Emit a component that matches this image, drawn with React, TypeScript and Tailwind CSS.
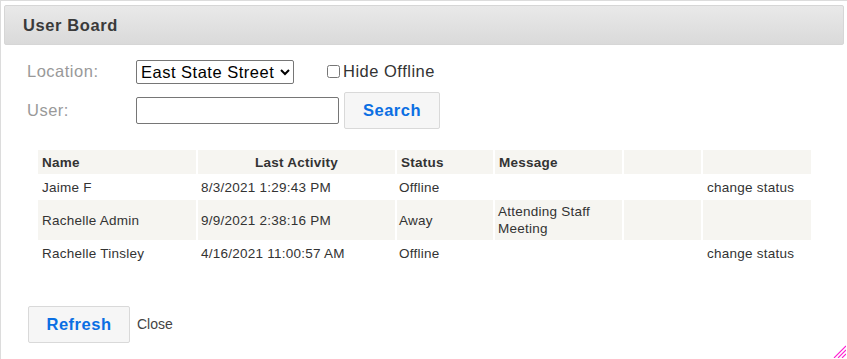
import React from "react";

const rows = [
  { name: "Jaime F", last: "8/3/2021 1:29:43 PM", status: "Offline", msg: "", action: "change status" },
  { name: "Rachelle Admin", last: "9/9/2021 2:38:16 PM", status: "Away", msg: "Attending Staff Meeting", action: "" },
  { name: "Rachelle Tinsley", last: "4/16/2021 11:00:57 AM", status: "Offline", msg: "", action: "change status" },
];

function ResizeGrip() {
  // jquery-ui style corner grip, magenta diagonals
  return (
    <svg className="absolute right-[1px] bottom-[1px]" width="13" height="13" viewBox="0 0 13 13">
      <g stroke="#ff1fd0" strokeWidth="1.1">
        <line x1="13" y1="1" x2="1" y2="13" />
        <line x1="13" y1="5" x2="5" y2="13" />
        <line x1="13" y1="9" x2="9" y2="13" />
      </g>
    </svg>
  );
}

export default function App() {
  return (
    <div className="relative h-[359px] w-[847px] overflow-hidden border-l border-t border-[#dcdcdc] bg-white pl-[3px] pr-[3px] pt-[4px] font-['Liberation_Sans',Arial,sans-serif] text-[#333]">
      {/* title bar */}
      <div className="flex h-[40px] items-center rounded-[2px] border border-[#d6d6d6] bg-gradient-to-b from-[#e9e9e9] to-[#dadada] pl-[18px]">
        <span className="text-[16.5px] font-bold tracking-[0.6px] text-[#3a3a3a]">User Board</span>
      </div>

      <div className="pl-[23px] pt-[14px] text-[16.5px] tracking-[0.5px]">
        <div className="flex h-[25px] items-center">
          <label className="w-[109px] text-[#999]">Location:</label>
          <select className="h-[24px] w-[158px] rounded-[2px] border border-[#767676] bg-white pl-0 text-black" defaultValue="east">
            <option value="east">East State Street</option>
          </select>
          <label className="ml-[33px] flex items-center text-[#333]">
            <input type="checkbox" className="m-0 mr-[3px] h-[13px] w-[13px]" />
            Hide Offline
          </label>
        </div>

        <div className="mt-[8px] flex h-[37px] items-center">
          <label className="w-[109px] text-[#999]">User:</label>
          <input type="text" className="h-[27px] w-[203px] rounded-[2px] border border-[#767676] bg-white" />
          <button className="ml-[5px] h-[37px] w-[96px] rounded-[2px] border border-[#d9d9d9] bg-[#f6f6f6] font-bold text-[#0b6fe3]">
            Search
          </button>
        </div>
      </div>

      <table className="ml-[32px] mt-[19px] border-separate border-spacing-[2px] text-[13.5px] leading-[17px] tracking-[0.25px] text-[#333]">
        <thead>
          <tr className="bg-[#f6f5f1]">
            <th className="h-[24px] w-[158px] px-[4px] text-left font-bold">Name</th>
            <th className="w-[197px] px-[4px] text-center font-bold">Last Activity</th>
            <th className="w-[96px] px-[4px] text-left font-bold">Status</th>
            <th className="w-[127px] px-[4px] text-left font-bold">Message</th>
            <th className="w-[77px]"></th>
            <th className="w-[108px]"></th>
          </tr>
        </thead>
        <tbody>
          {rows.map((r, i) => (
            <tr key={r.name} className={i % 2 === 1 ? "bg-[#f6f5f1]" : "bg-white"}>
              <td className="h-[22px] px-[4px] py-[2px]">{r.name}</td>
              <td className="px-[3px] py-[2px]">{r.last}</td>
              <td className="px-[2px] py-[2px]">{r.status}</td>
              <td className="px-[3px] py-[3px] leading-[17px]">{r.msg}</td>
              <td></td>
              <td className="px-[4px] py-[2px]">{r.action}</td>
            </tr>
          ))}
        </tbody>
      </table>

      <div className="ml-[24px] mt-[40px] flex items-center">
        <button className="h-[37px] w-[102px] rounded-[2px] border border-[#d9d9d9] bg-[#f6f6f6] text-[16.5px] font-bold tracking-[0.5px] text-[#0b6fe3]">
          Refresh
        </button>
        <span className="ml-[7px] text-[14px] text-[#444]">Close</span>
      </div>

      <ResizeGrip />
    </div>
  );
}
